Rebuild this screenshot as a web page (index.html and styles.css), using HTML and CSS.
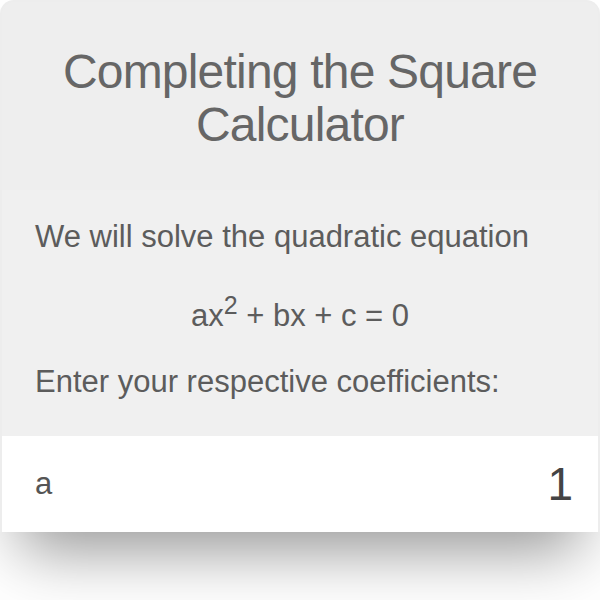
FILE: index.html
```html
<!DOCTYPE html>
<html lang="en">
<head>
    <meta charset="UTF-8">
    <meta name="viewport" content="width=device-width, initial-scale=1.0">
    <title>Completing the Square Calculator</title>
    <link rel="stylesheet" href="styles.css">
</head>
<body>
    <div class="card">
        <div class="card-header">
            <h1>Completing the Square Calculator</h1>
        </div>
        <div class="card-body">
            <p class="intro">We will solve the quadratic equation</p>
            <p class="equation">ax<sup>2</sup> + bx + c = 0</p>
            <p class="intro">Enter your respective coefficients:</p>
        </div>
        <div class="field-row">
            <label for="coefA">a</label>
            <span class="field-value" id="coefA">1</span>
        </div>
    </div>
</body>
</html>
```

FILE: styles.css
```css
body {
    font-family: "Liberation Sans", Arial, sans-serif;
    background-color: #fff;
    margin: 0;
    padding: 0 0 68px;
}
.card {
    width: 596px;
    border: 2px solid #ededed;
    border-bottom: none;
    border-radius: 14px 14px 0 0;
    background-color: #eeeeee;
    box-shadow: 0 38px 60px -20px rgba(0, 0, 0, 0.42);
}
.card-header {
    padding: 43px 20px 39px;
    border-radius: 14px 14px 0 0;
    background-color: #eeeeee;
}
h1 {
    margin: 0;
    font-size: 48px;
    line-height: 53px;
    font-weight: normal;
    letter-spacing: -0.8px;
    text-align: center;
    color: #666;
}
.card-body {
    background-color: #f0f0f0;
    padding: 29px 33px 36px;
}
.card-body p {
    margin: 0;
    font-size: 31px;
    line-height: 36px;
    color: #5c5c5c;
}
.equation {
    text-align: center;
    margin-top: 43px !important;
    margin-bottom: 30px !important;
}
.equation sup {
    font-size: 25px;
    line-height: 0;
    vertical-align: 12px;
}
.field-row {
    display: flex;
    align-items: center;
    justify-content: space-between;
    height: 96px;
    padding: 0 28px 0 33px;
    background-color: #fff;
}
.field-row label {
    font-size: 31px;
    line-height: 36px;
    color: #555;
}
.field-value {
    font-size: 46px;
    line-height: 54px;
    letter-spacing: -3px;
    color: #444;
}
```
